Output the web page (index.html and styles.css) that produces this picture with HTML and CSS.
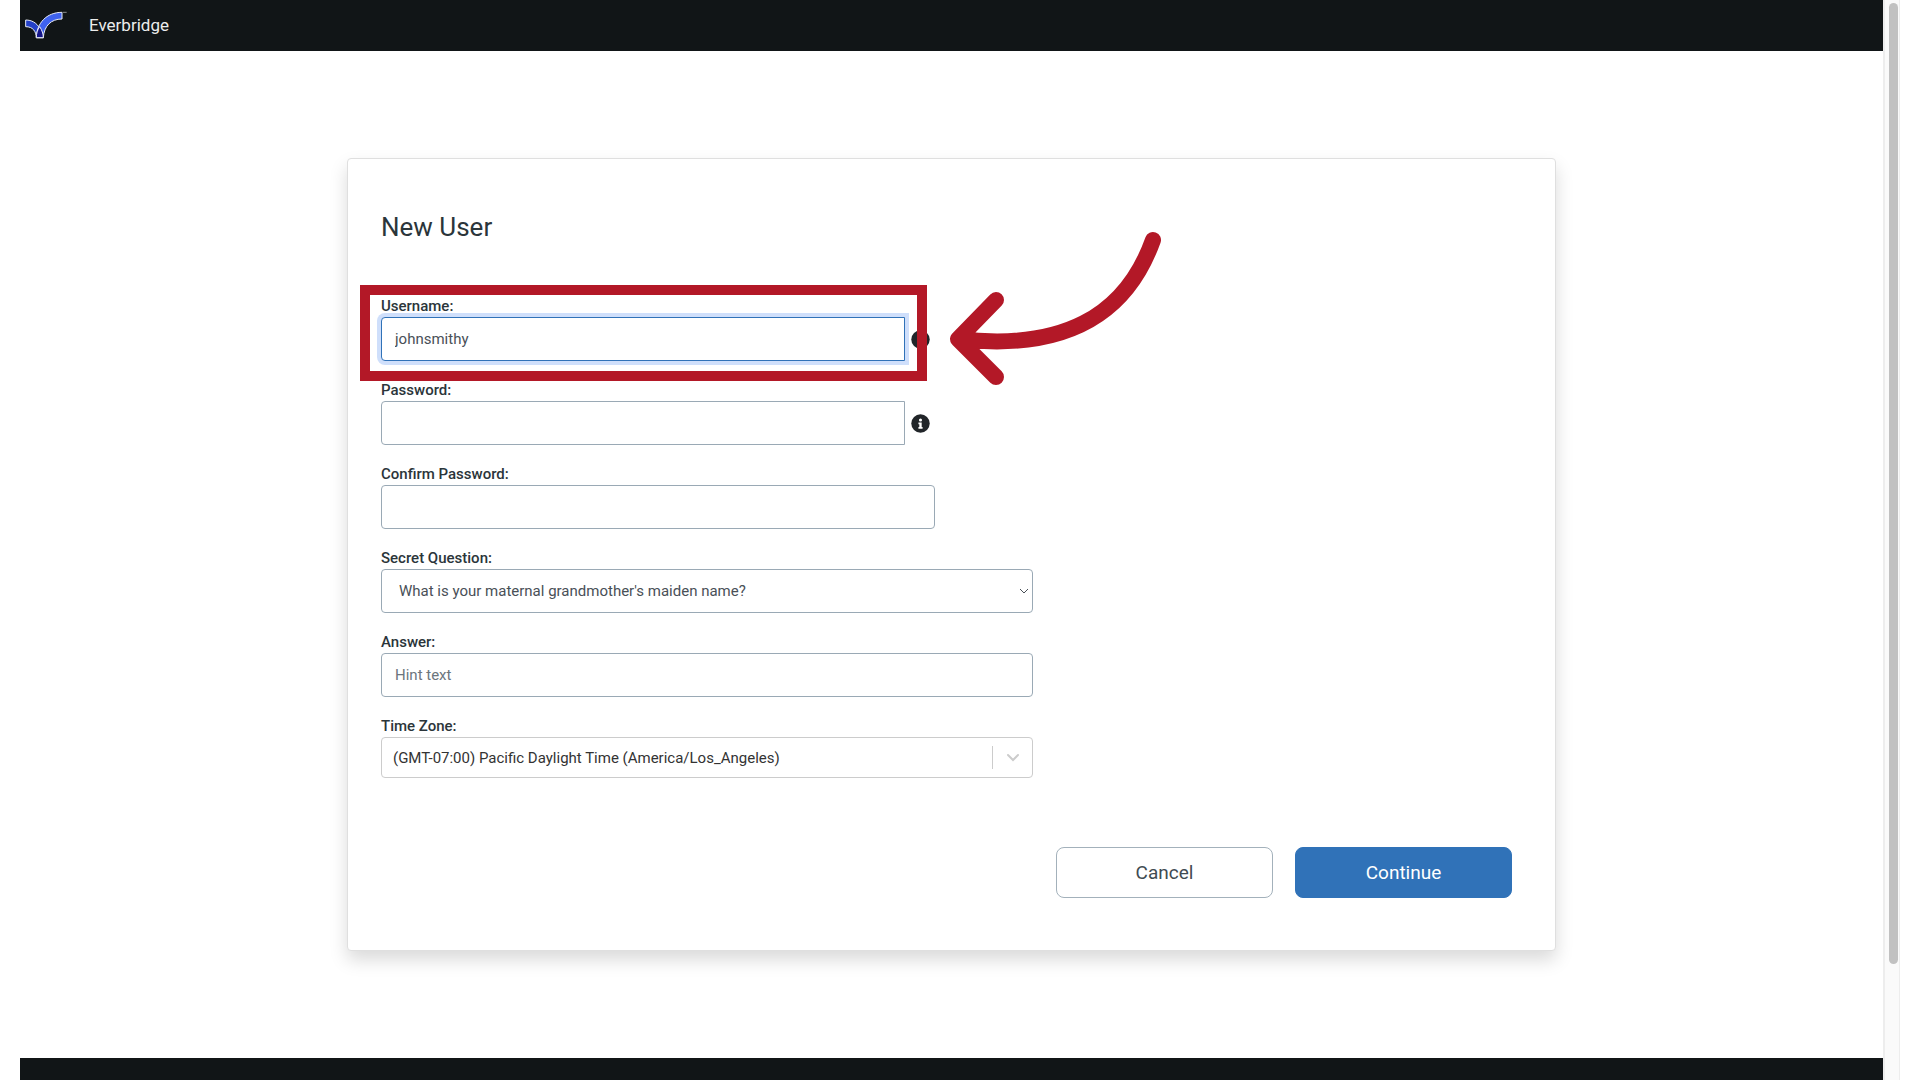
FILE: index.html
```html
<!DOCTYPE html>
<html lang="en">
<head>
  <meta charset="UTF-8" />
  <meta name="viewport" content="width=device-width, initial-scale=1.0"/>
  <title>Everbridge - New User</title>
  <link rel="stylesheet" href="styles.css">
</head>
<body>
  <div class="page">
    <header class="topbar">
      <svg class="logo" viewBox="0 0 135 90" aria-hidden="true">
        <g stroke="#e8ebf5" stroke-width="3" stroke-linejoin="round">
          <path fill="#2440c8" d="M8 30C26 30 40 38 50 54C57 64 61 74 61 83H40C39 64 30 50 8 50Z"/>
          <path fill="#3f62ee" d="M117 7V27C84 27 63 48 61 83H40C41 40 70 7 117 7Z"/>
          <path fill="#15158a" d="M50 50C57 60 61 72 61 83H40C40 70 43 60 50 50Z"/>
        </g>
        <path stroke="#8c8f91" stroke-width="3" d="M119 7H131"/>
      </svg>
      <span class="brand">Everbridge</span>
    </header>

    <main class="content">
      <form class="card">
        <h1 class="title">New User</h1>

        <div class="field highlighted">
          <label for="username">Username:</label>
          <div class="row">
            <input type="text" id="username" class="control short active" value="johnsmithy" />
            <svg class="info" viewBox="0 0 512 512" role="img" aria-label="Username rules">
              <circle cx="256" cy="256" r="248"/>
              <path fill="#fff" d="M256 118a42 42 0 1 1 0 84a42 42 0 1 1 0-84zM200 230h88v122h24v44H200v-44h24v-78h-24z"/>
            </svg>
          </div>
          <div class="callout"></div>
          <svg class="arrow" viewBox="0 0 220 160" aria-hidden="true">
            <path d="M208 11C180 89 116 122 13 110M51 71L13 110L51 148"/>
          </svg>
        </div>

        <div class="field">
          <label for="password">Password:</label>
          <div class="row">
            <input type="password" id="password" class="control short" />
            <svg class="info" viewBox="0 0 512 512" role="img" aria-label="Password rules">
              <circle cx="256" cy="256" r="248"/>
              <path fill="#fff" d="M256 118a42 42 0 1 1 0 84a42 42 0 1 1 0-84zM200 230h88v122h24v44H200v-44h24v-78h-24z"/>
            </svg>
          </div>
        </div>

        <div class="field">
          <label for="confirm">Confirm Password:</label>
          <input type="password" id="confirm" class="control medium" />
        </div>

        <div class="field">
          <label for="question">Secret Question:</label>
          <div class="select-box">
            <select id="question" class="control">
              <option>What is your maternal grandmother's maiden name?</option>
            </select>
            <svg class="caret" viewBox="0 0 10 6" aria-hidden="true"><path d="M1 1L5 5L9 1"/></svg>
          </div>
        </div>

        <div class="field">
          <label for="answer">Answer:</label>
          <input type="text" id="answer" class="control" placeholder="Hint text" />
        </div>

        <div class="field">
          <label for="timezone">Time Zone:</label>
          <div class="select-box">
            <select id="timezone" class="control zone">
              <option>(GMT-07:00) Pacific Daylight Time (America/Los_Angeles)</option>
            </select>
            <span class="indicator">
              <svg viewBox="0 0 14 9" aria-hidden="true"><path d="M2 2L7 7L12 2"/></svg>
            </span>
          </div>
        </div>

        <div class="actions">
          <button type="button" class="btn">Cancel</button>
          <button type="submit" class="btn primary">Continue</button>
        </div>
      </form>
    </main>

    <footer class="footer"></footer>
  </div>

  <div class="scrollbar"><div class="thumb"></div></div>
</body>
</html>
```
FILE: styles.css
```css
* {
  box-sizing: border-box;
}
body {
  display: flex;
  height: 100vh;
  margin: 0;
  padding: 0 20px;
  overflow: hidden;
  background: #fff;
  color: #2b353a;
  font-family: Roboto, "Liberation Sans", sans-serif;
  font-size: 15px;
}

.page {
  flex: 1;
  display: flex;
  flex-direction: column;
}
.topbar {
  display: flex;
  align-items: center;
  height: 51px;
  padding: 0 3px 2px;
  background: #111517;
}
.logo {
  width: 45px;
  height: 30px;
  fill: none;
}
.brand {
  margin-left: 21px;
  color: #eceded;
  font-size: 17px;
}
.content {
  padding: 107px 24px;
}
.footer {
  flex: 1;
  background: #111517;
}

.card {
  max-width: 1209px;
  margin: 0 auto;
  padding: 50px 43px 52px 33px;
  border: 1px solid #dfdfdf;
  border-radius: 4px;
  background: #fff;
  box-shadow: 0 9px 18px rgba(0, 0, 0, 0.15);
}
.title {
  margin: 0 0 50px;
  font-size: 26px;
  font-weight: 400;
  line-height: 36px;
}

.field {
  max-width: 652px;
  margin-bottom: 18px;
}
.field label {
  display: block;
  font-weight: 500;
  line-height: 22px;
}
.row {
  display: flex;
  align-items: center;
}
.control {
  display: block;
  width: 100%;
  height: 44px;
  padding: 0 13px;
  border: 1px solid #9aa9b5;
  border-radius: 4px;
  outline: none;
  background: #fff;
  color: #495057;
  font-family: inherit;
  font-size: 15px;
}
.control::placeholder {
  color: #6c757d;
  opacity: 1;
}
.medium {
  max-width: 554px;
}
.short {
  max-width: 524px;
  border-radius: 4px 0 0 4px;
}
.active {
  border-color: #3072b8;
  box-shadow: 0 0 0 4px #cfdffb;
}
.info {
  width: 19px;
  height: 19px;
  margin-left: 6px;
  fill: #212529;
}

.select-box {
  position: relative;
}
select.control {
  appearance: none;
  padding: 0 17px;
}
.caret {
  position: absolute;
  top: 19px;
  right: 4px;
  width: 10px;
  height: 6px;
  fill: none;
  stroke: #495057;
}
select.zone {
  height: 41px;
  padding: 0 11px;
  border-color: #ccc;
  color: #333;
}
.indicator {
  position: absolute;
  top: 9px;
  right: 0;
  display: flex;
  align-items: center;
  justify-content: center;
  width: 41px;
  height: 23px;
  border-left: 1px solid #ccc;
  pointer-events: none;
}
.indicator svg {
  width: 14px;
  height: 9px;
  fill: none;
  stroke: #ccc;
  stroke-width: 2;
  stroke-linecap: round;
}

/* red frame and arrow over the username field */
.highlighted {
  position: relative;
}
.callout {
  position: absolute;
  top: -10px;
  left: -21px;
  width: 567px;
  height: 96px;
  border: 10px solid #b31827;
  pointer-events: none;
}
.arrow {
  position: absolute;
  top: -66px;
  left: 564px;
  width: 220px;
  height: 160px;
  fill: none;
  stroke: #b31827;
  stroke-width: 16;
  stroke-linecap: round;
  stroke-linejoin: round;
  pointer-events: none;
}

.actions {
  display: flex;
  justify-content: flex-end;
  gap: 22px;
  margin-top: 69px;
}
.btn {
  width: 217px;
  height: 51px;
  border: 1px solid #a3b1bb;
  border-radius: 8px;
  background: #fff;
  color: #3f4b52;
  font-family: inherit;
  font-size: 19px;
}
.primary {
  border-color: #3072b8;
  background: #3072b8;
  color: #fff;
}

.scrollbar {
  width: 17px;
  padding: 3px 4px;
  border-left: 2px solid #ededed;
  border-right: 1px solid #ededed;
  background: #fafafa;
}
.thumb {
  width: 9px;
  height: 89.5%;
  border-radius: 5px;
  background: #c1c1c1;
}
```
